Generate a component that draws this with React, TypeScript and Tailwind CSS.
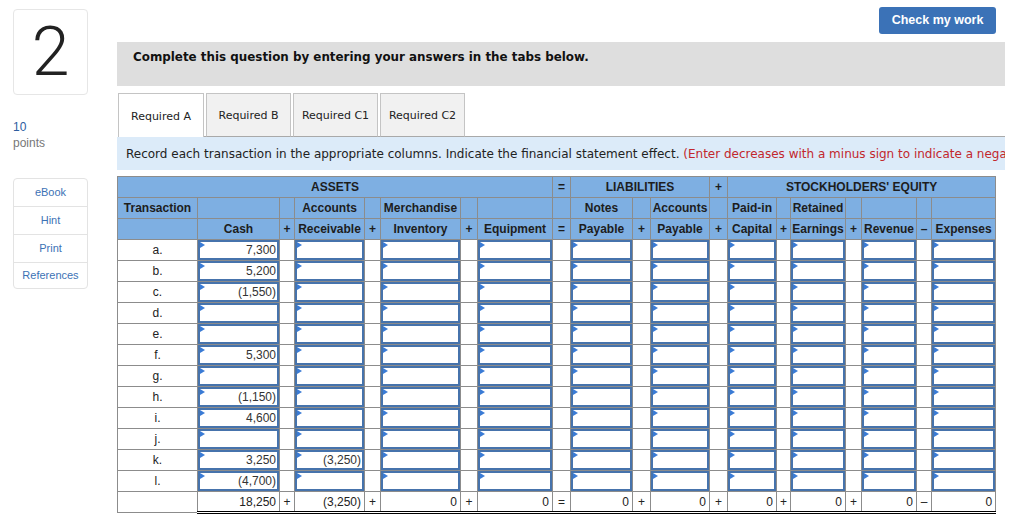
const colW = [
  "w-[80px]", "w-[82px]", "w-[15px]", "w-[70px]", "w-[16px]", "w-[80px]", "w-[17px]",
  "w-[75px]", "w-[18px]", "w-[62px]", "w-[18px]", "w-[59px]", "w-[18px]", "w-[49px]",
  "w-[14px]", "w-[55px]", "w-[16px]", "w-[55px]", "w-[15px]", "w-[64px]",
];

const head2 = [
  "Transaction", "", "", "Accounts", "", "Merchandise", "", "", "", "Notes",
  "", "Accounts", "", "Paid-in", "", "Retained", "", "", "", "",
];
const head3 = [
  "", "Cash", "+", "Receivable", "+", "Inventory", "+", "Equipment", "=", "Payable",
  "+", "Payable", "+", "Capital", "+", "Earnings", "+", "Revenue", "–", "Expenses",
];

// cash, receivable per row; the rest of the inputs are empty
const rows: { label: string; cash?: string; ar?: string }[] = [
  { label: "a.", cash: "7,300" },
  { label: "b.", cash: "5,200" },
  { label: "c.", cash: "(1,550)" },
  { label: "d." },
  { label: "e." },
  { label: "f.", cash: "5,300" },
  { label: "g." },
  { label: "h.", cash: "(1,150)" },
  { label: "i.", cash: "4,600" },
  { label: "j." },
  { label: "k.", cash: "3,250", ar: "(3,250)" },
  { label: "l.", cash: "(4,700)" },
];

const totals = [
  "", "18,250", "+", "(3,250)", "+", "0", "+", "0", "=", "0",
  "+", "0", "+", "0", "+", "0", "+", "0", "–", "0",
];

const hd =
  "border border-[#8c8c8c] bg-[#7eafe2] p-0 h-[21px] text-center font-bold text-[12px] leading-none text-[#1d1d1d] whitespace-nowrap";
const cell = "border border-[#8c8c8c] p-0 h-[21px]";

function Input({ value }: { value?: string }) {
  return (
    <div className="relative h-[20px] border-2 border-[#4673ac] bg-white pr-[1px] text-right text-[12px] leading-[16px] text-[#333]">
      <span className="absolute left-0 top-0 w-0 h-0 border-y-[3px] border-l-[5px] border-y-transparent border-l-[#3a7bd5]" />
      {value}
    </div>
  );
}

export default function App() {
  return (
    <div className="w-[1024px] h-[515px] overflow-hidden bg-white flex font-['Liberation_Sans',Arial,sans-serif] text-[#222]">
      <aside className="w-[117px] shrink-0 pl-[13px] pt-[9px]">
        <div className="w-[75px] h-[86px] border border-[#e6e6e6] rounded-[4px] flex items-center justify-center font-['Roboto',sans-serif] font-light text-[68px] leading-none text-[#222]">
          2
        </div>
        <div className="mt-[24px] text-[12px] leading-[16px]">
          <div className="text-[#2d5c9f]">10</div>
          <div className="text-[#777]">points</div>
        </div>
        <div className="mt-[27px] w-[75px] border border-[#e3e3e3] rounded-[4px] text-[11px] text-[#3c72b5]">
          <div className="h-[28px] flex items-center justify-center border-b border-[#e3e3e3]">eBook</div>
          <div className="h-[28px] flex items-center justify-center border-b border-[#e3e3e3]">Hint</div>
          <div className="h-[28px] flex items-center justify-center border-b border-[#e3e3e3]">Print</div>
          <div className="h-[25px] flex items-center justify-center">References</div>
        </div>
      </aside>

      <main className="w-[888px] shrink-0">
        <div className="h-[42px] flex justify-end items-start pt-[7px] pr-[9px]">
          <button className="h-[27px] w-[117px] rounded-[3px] bg-[#3b72b7] text-white font-bold text-[12.5px]">
            Check my work
          </button>
        </div>

        <div className="h-[44px] bg-[#dedede] pt-[8px] pl-[16px] font-['DejaVu_Sans',Verdana,sans-serif] font-bold text-[11.9px] leading-[14px] text-[#111]">
          Complete this question by entering your answers in the tabs below.
        </div>

        <div className="mt-[7px] h-[44px] flex items-end pl-[1px] font-['DejaVu_Sans',Verdana,sans-serif] text-[11px] text-[#222]">
          <div className="w-[86px] h-[44px] pt-[3px] flex items-center justify-center border border-b-0 border-[#c4c4c4] bg-white">Required A</div>
          <div className="w-[2px] h-[44px] border-b border-[#a9a9a9]" />
          <div className="w-[85px] h-[44px] pt-[3px] flex items-center justify-center border border-[#c4c4c4] border-b-[#a9a9a9] bg-[#f1f1f1]">Required B</div>
          <div className="w-[2px] h-[44px] border-b border-[#a9a9a9]" />
          <div className="w-[85px] h-[44px] pt-[3px] flex items-center justify-center border border-[#c4c4c4] border-b-[#a9a9a9] bg-[#f1f1f1]">Required C1</div>
          <div className="w-[2px] h-[44px] border-b border-[#a9a9a9]" />
          <div className="w-[85px] h-[44px] pt-[3px] flex items-center justify-center border border-[#c4c4c4] border-b-[#a9a9a9] bg-[#f1f1f1]">Required C2</div>
          <div className="flex-1 h-[44px] border-b border-[#a9a9a9]" />
        </div>

        <div className="h-[33px] bg-[#dcebf9] flex items-center pl-[9px] whitespace-nowrap overflow-hidden font-['DejaVu_Sans',Verdana,sans-serif] text-[12px] text-[#222]">
          Record each transaction in the appropriate columns. Indicate the financial statement effect.&nbsp;
          <span className="text-[#c2272d]">(Enter decreases with a minus sign to indicate a negative financial statement effect.)</span>
        </div>

        <table className="mt-[6px] table-fixed border-collapse w-[878px]">
          <colgroup>
            {colW.map((w, i) => (
              <col key={i} className={w} />
            ))}
          </colgroup>
          <thead>
            <tr>
              <th colSpan={8} className={hd}>ASSETS</th>
              <th className={hd}>=</th>
              <th colSpan={3} className={hd}>LIABILITIES</th>
              <th className={hd}>+</th>
              <th colSpan={7} className={hd}>STOCKHOLDERS' EQUITY</th>
            </tr>
            <tr>
              {head2.map((t, i) => (
                <th key={i} className={hd}>{t}</th>
              ))}
            </tr>
            <tr>
              {head3.map((t, i) => (
                <th key={i} className={hd}>{t}</th>
              ))}
            </tr>
          </thead>
          <tbody className="text-[12px]">
            {rows.map((r) => (
              <tr key={r.label}>
                {colW.map((_, i) => {
                  if (i === 0)
                    return (
                      <td key={i} className={`${cell} text-center text-[#222]`}>
                        {r.label}
                      </td>
                    );
                  if (i % 2 === 0) return <td key={i} className={cell} />;
                  const v = i === 1 ? r.cash : i === 3 ? r.ar : undefined;
                  return (
                    <td key={i} className={cell}>
                      <Input value={v} />
                    </td>
                  );
                })}
              </tr>
            ))}
            <tr>
              {totals.map((t, i) =>
                i === 0 ? (
                  <td key={i} className={cell} />
                ) : (
                  <td
                    key={i}
                    className={`${cell} border-b-[3px] border-b-black [border-bottom-style:double] text-[#222] ${
                      i % 2 === 0 ? "text-center" : "text-right pr-[3px]"
                    }`}
                  >
                    {t}
                  </td>
                )
              )}
            </tr>
          </tbody>
        </table>
      </main>
    </div>
  );
}
